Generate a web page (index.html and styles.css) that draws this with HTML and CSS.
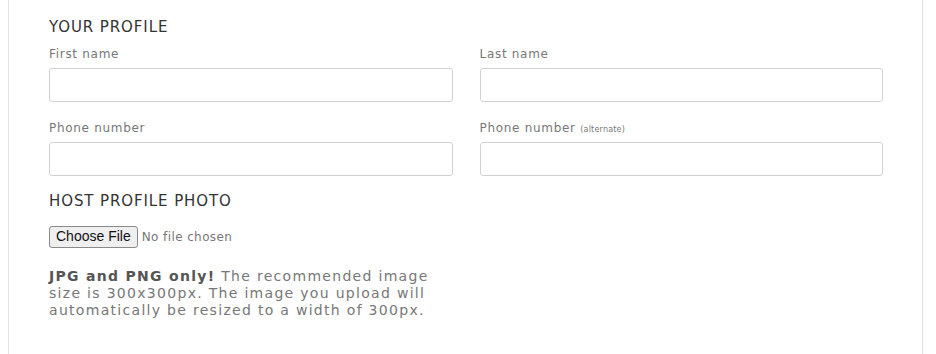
FILE: index.html
```html
<!DOCTYPE html>
<html>
<head>
<meta charset="utf-8">
<link rel="stylesheet" href="styles.css">
</head>
<body>
<div class="panel">
  <h2 class="section-title">YOUR PROFILE</h2>
  <div class="grid">
    <div class="field">
      <label class="label">First name</label>
      <input class="input" type="text">
    </div>
    <div class="field">
      <label class="label">Last name</label>
      <input class="input" type="text">
    </div>
    <div class="field">
      <label class="label">Phone number</label>
      <input class="input" type="text">
    </div>
    <div class="field">
      <label class="label">Phone number <small class="hint">(alternate)</small></label>
      <input class="input" type="text">
    </div>
  </div>
  <h2 class="section-title photo-title">HOST PROFILE PHOTO</h2>
  <div class="file-row">
    <input class="file" type="file">
  </div>
  <p class="note"><strong>JPG and PNG only!</strong> The recommended image size is 300x300px. The image you upload will automatically be resized to a width of 300px.</p>
</div>
</body>
</html>
```
FILE: styles.css
```css
html, body {
  margin: 0;
  padding: 0;
  background: #ffffff;
  height: 100%;
}
body {
  font-family: "DejaVu Sans", "Open Sans", sans-serif;
  color: #333;
}
.panel {
  margin-left: 8px;
  min-height: 354px;
  box-sizing: border-box;
  width: 915px;
  border-left: 1px solid #e2e2e2;
  border-right: 1px solid #e2e2e2;
  padding: 18px 39px 0 40px;
}
.section-title {
  margin: 0;
  font-size: 15px;
  font-weight: normal;
  letter-spacing: 0.9px;
  line-height: 18px;
  color: #333;
}
.grid {
  display: grid;
  grid-template-columns: 1fr 1fr;
  column-gap: 27px;
  row-gap: 18px;
  margin-top: 10px;
}
.field {
  display: flex;
  flex-direction: column;
}
.label {
  display: block;
  height: 16px;
  font-size: 12px;
  letter-spacing: 0.7px;
  line-height: 16px;
  color: #777;
  margin-bottom: 6px;
}
.hint {
  font-size: 8px;
  line-height: 1;
  letter-spacing: 0.2px;
}
.input {
  height: 34px;
  box-sizing: border-box;
  border: 1px solid #d2d2d2;
  border-radius: 3px;
  background: #fff;
}
.photo-title {
  margin-top: 16px;
}
.file-row {
  margin-top: 16px;
  height: 23px;
}
.file {
  font-family: inherit;
  font-size: 12px;
  letter-spacing: 0.4px;
  color: #777;
}
.file::file-selector-button {
  font-family: "Liberation Sans", sans-serif;
  font-size: 14px;
  line-height: 17px;
  letter-spacing: 0;
  color: #111;
  background: #efefef;
  border: 1px solid #8a8a8a;
  border-radius: 3px;
  padding: 1px 6px 2px;
  margin-right: 4px;
}
.note {
  margin: 19px 0 0;
  width: 400px;
  font-size: 14px;
  letter-spacing: 1.3px;
  line-height: 17px;
  color: #777;
}
.note strong {
  color: #555;
}
```
